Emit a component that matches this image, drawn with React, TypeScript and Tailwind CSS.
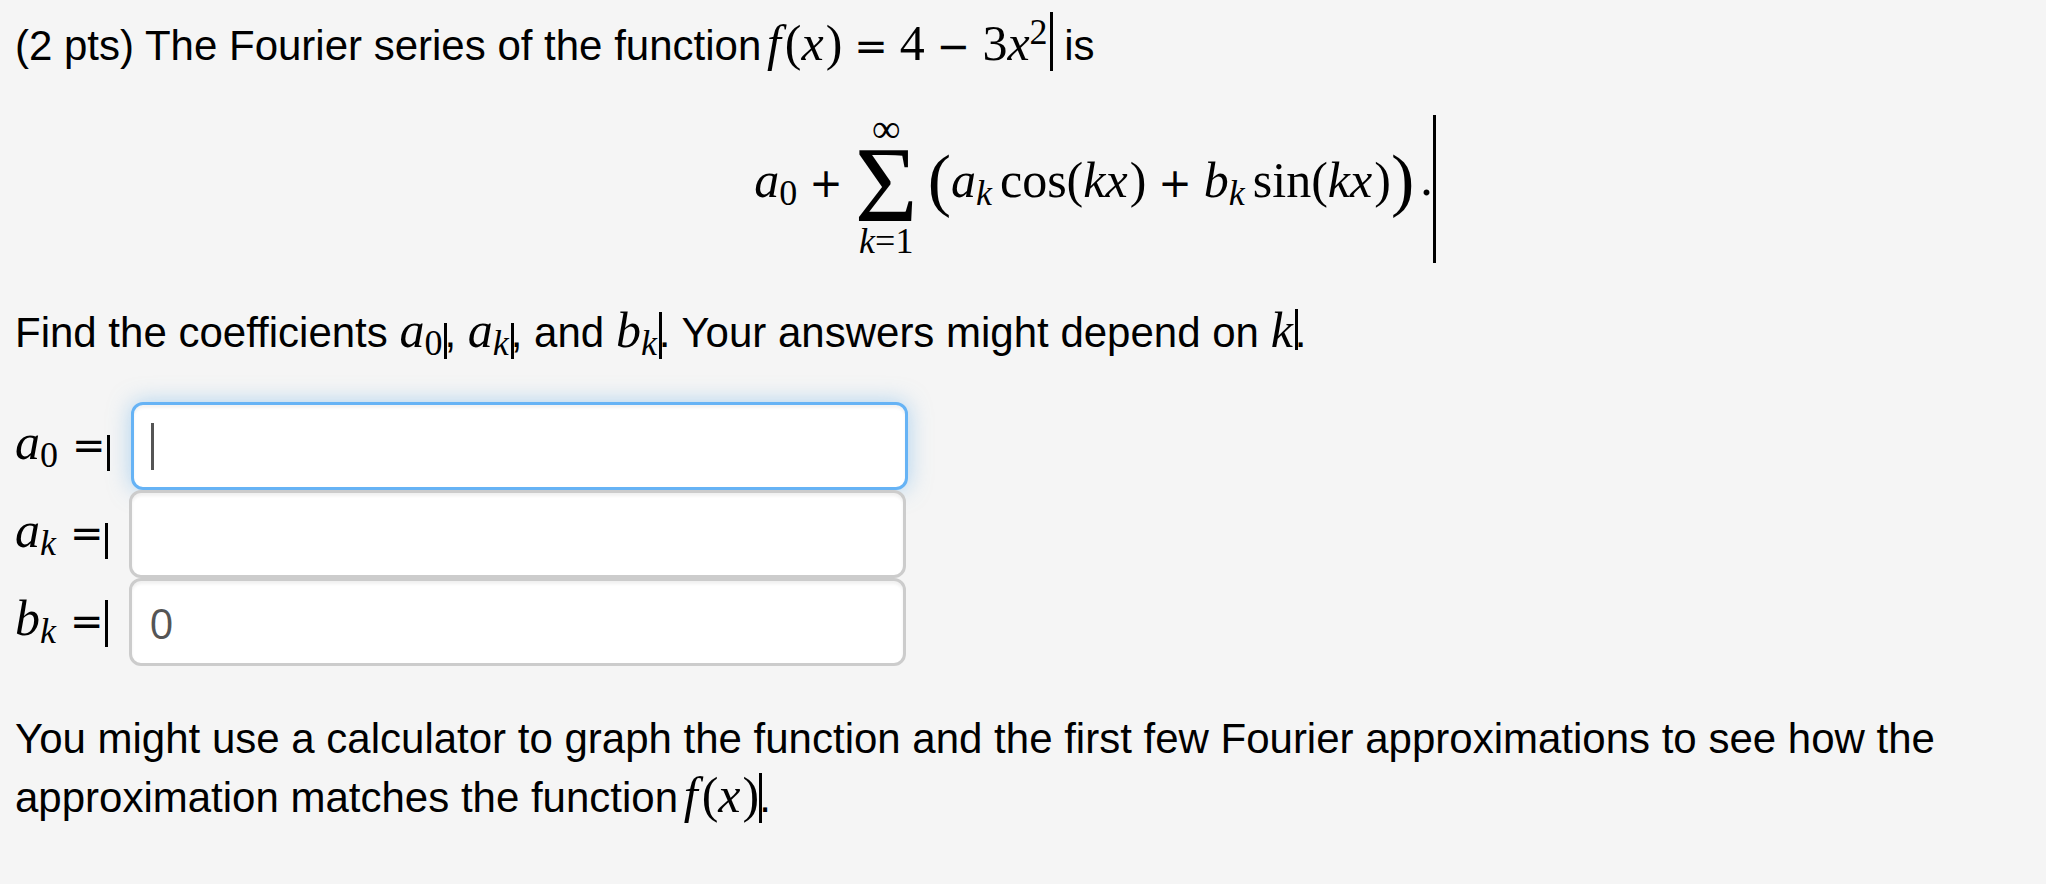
import type { ReactNode } from "react";

const Formula = ({ children }: { children: ReactNode }) => (
  <span className="font-['Liberation_Serif',serif] text-[50px] leading-none whitespace-nowrap">
    {children}
  </span>
);

const Sub = ({ children }: { children: ReactNode }) => (
  <span className="relative top-2 text-[36px] leading-none">{children}</span>
);

const Sign = ({ children }: { children: ReactNode }) => (
  <span className="font-['DejaVu_Sans',sans-serif] text-[40px] leading-none">{children}</span>
);

const Op = ({ children }: { children: ReactNode }) => (
  <span className="mx-3">
    <Sign>{children}</Sign>
  </span>
);

// f(x), the f hangs back into the space before it
const Fx = () => (
  <>
    <i className="mr-1 -ml-1.5">f</i>(<i>x</i>
    <span className="ml-0.5">)</span>
  </>
);

// thin rule drawn after every inline formula
const Bar = ({ className }: { className: string }) => (
  <span className={`inline-block w-[3px] bg-black ${className}`} />
);

const short = "h-[36px] align-[-12px]";
const tall = "h-[47px] align-[-12px]";

type FieldProps = {
  id: string;
  label: ReactNode;
  bar: string;
  value?: string;
  active?: boolean;
};

const Field = ({ id, label, bar, value = "", active = false }: FieldProps) => (
  <div className="flex h-[88px] items-center">
    <label htmlFor={id} className="mr-[21px] pb-1">
      <Formula>
        {label}
        <span className="ml-3.5">
          <Sign>=</Sign>
        </span>
        <Bar className={`ml-px ${bar}`} />
      </Formula>
    </label>
    <div className="relative">
      <input
        id={id}
        type="text"
        defaultValue={value}
        className={`block h-[88px] w-[777px] rounded-xl border-[3px] bg-white px-[18px] font-['Open_Sans',sans-serif] text-[42px] text-[#555] outline-none ${
          active
            ? "border-[#66b3f5] shadow-[inset_0_3px_3px_rgba(0,0,0,0.05),0_0_22px_rgba(102,175,233,0.5)]"
            : "border-[#ccc] shadow-[inset_0_3px_3px_rgba(0,0,0,0.06)]"
        }`}
      />
      {active && <span className="absolute top-[21px] left-5 h-[47px] w-[3px] bg-[#555]" />}
    </div>
  </div>
);

export default function App() {
  return (
    <main className="min-h-screen space-y-10 bg-[#f5f5f5] px-[15px] py-3 font-['Liberation_Sans',sans-serif] text-[42px] leading-[59px] text-black">
      <p>
        (2 pts) The Fourier series of the function{" "}
        <Formula>
          <Fx />
          <Op>=</Op>4<Op>−</Op>3<i>x</i>
          <span className="relative -top-4 text-[36px] leading-none">2</span>
          <Bar className="ml-0.5 h-[59px] align-[-11px]" />
        </Formula>{" "}
        is
      </p>

      <div className="flex h-[148px] justify-center pl-[144px]">
        <div className="flex items-center pb-[18px]">
          <Formula>
            <i>a</i>
            <Sub>0</Sub>
            <Op>+</Op>
          </Formula>
          <div className="flex flex-col items-center pt-4 font-['Liberation_Serif',serif] text-[36px] leading-none">
            <span className="h-[30px] text-[40px] leading-6">∞</span>
            <span className="h-[76px] text-[108px] leading-[76px]">Σ</span>
            <span>
              <i>k</i>=1
            </span>
          </div>
          <span className="ml-2.5 font-['Liberation_Serif',serif] text-[70px] leading-none">(</span>
          <Formula>
            <i>a</i>
            <Sub>
              <i>k</i>
            </Sub>
            <span className="ml-2">cos(</span>
            <i>kx</i>
            <span className="ml-0.5">)</span>
            <Op>+</Op>
            <i>b</i>
            <Sub>
              <i>k</i>
            </Sub>
            <span className="ml-2">sin(</span>
            <i>kx</i>
            <span className="ml-0.5">)</span>
          </Formula>
          <span className="font-['Liberation_Serif',serif] text-[70px] leading-none">)</span>
          <span className="ml-1.5">
            <Formula>.</Formula>
          </span>
        </div>
        <Bar className="h-full" />
      </div>

      <p>
        Find the coefficients{" "}
        <Formula>
          <i>a</i>
          <Sub>0</Sub>
          <Bar className={`-mr-[3px] ml-0.5 ${short}`} />
        </Formula>
        ,{" "}
        <Formula>
          <i>a</i>
          <Sub>
            <i>k</i>
          </Sub>
          <Bar className={`-mr-[3px] ml-0.5 ${short}`} />
        </Formula>
        , and{" "}
        <Formula>
          <i>b</i>
          <Sub>
            <i>k</i>
          </Sub>
          <Bar className={`-mr-[3px] ml-0.5 ${tall}`} />
        </Formula>
        . Your answers might depend on{" "}
        <Formula>
          <i>k</i>
          <Bar className="-mr-[3px] ml-0.5 h-[41px] align-[-3px]" />
        </Formula>
        .
      </p>

      <form className="mb-[43px]">
        <Field id="a0" label={<><i>a</i><Sub>0</Sub></>} bar={short} active />
        <Field id="ak" label={<><i>a</i><Sub><i>k</i></Sub></>} bar={short} />
        <Field id="bk" label={<><i>b</i><Sub><i>k</i></Sub></>} bar={tall} value="0" />
      </form>

      <p>
        You might use a calculator to graph the function and the first few Fourier approximations to
        see how the approximation matches the function{" "}
        <Formula>
          <Fx />
          <Bar className="-mr-[3px] h-[50px] align-[-11px]" />
        </Formula>
        .
      </p>
    </main>
  );
}
